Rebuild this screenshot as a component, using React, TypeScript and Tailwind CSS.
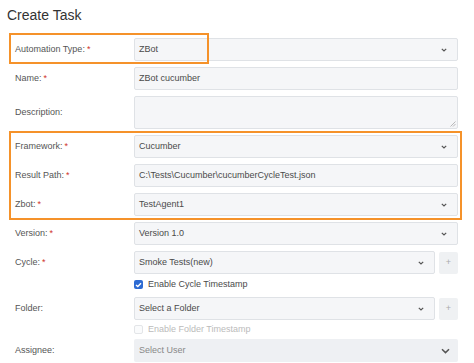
import React from "react";

const font = { fontFamily: '"Liberation Sans", Arial, sans-serif' };

function Chevron({ big = false }: { big?: boolean }) {
  return big ? (
    <svg width="9" height="6" viewBox="0 0 9 6" className="shrink-0">
      <path d="M1 1.2 L4.5 4.6 L8 1.2" fill="none" stroke="#555" strokeWidth="1.5" />
    </svg>
  ) : (
    <svg width="6" height="4" viewBox="0 0 6 4" className="shrink-0">
      <path d="M0.8 0.8 L3 3 L5.2 0.8" fill="none" stroke="#555" strokeWidth="1.2" />
    </svg>
  );
}

function Label({ text, required = false }: { text: string; required?: boolean }) {
  return (
    <div className="w-[119px] shrink-0 text-[9px] text-[#555]">
      {text}
      {required && <span className="ml-[2px] text-[#d0342c]">*</span>}
    </div>
  );
}

function Field({ value, select = false }: { value: string; select?: boolean }) {
  return (
    <div className="flex h-[23px] flex-1 items-center justify-between rounded-[2px] border border-[#dfe2e6] bg-[#f5f6f8] pl-[4px] pr-[10px] text-[9px] text-[#4a4a4a]">
      <span>{value}</span>
      {select && <Chevron />}
    </div>
  );
}

function Row({
  label,
  required,
  value,
  select,
  plus,
}: {
  label: string;
  required?: boolean;
  value: string;
  select?: boolean;
  plus?: boolean;
}) {
  return (
    <div className="flex items-center">
      <Label text={label} required={required} />
      <Field value={value} select={select} />
      {plus && (
        <div className="ml-[4px] flex h-[22px] w-[19px] items-center justify-center rounded-[2px] bg-[#eff1f3] text-[9px] text-[#aaa]">
          +
        </div>
      )}
    </div>
  );
}

function Check({ label, checked }: { label: string; checked: boolean }) {
  return (
    <div className="flex h-[11px] items-center pl-[119px]">
      {checked ? (
        <div className="flex h-[9px] w-[9px] items-center justify-center rounded-[2px] bg-[#2d6bd3]">
          <svg width="7" height="6" viewBox="0 0 7 6">
            <path d="M1 3 L2.8 4.6 L6 1.2" fill="none" stroke="#fff" strokeWidth="1.4" />
          </svg>
        </div>
      ) : (
        <div className="h-[9px] w-[9px] rounded-[2px] border border-[#e3e5e8] bg-[#fafbfc]" />
      )}
      <span className={`ml-[5px] text-[9px] ${checked ? "text-[#4a4a4a]" : "text-[#bbb]"}`}>{label}</span>
    </div>
  );
}

export default function App() {
  return (
    <div className="relative h-[363px] w-[474px] overflow-hidden bg-white" style={font}>
      <h1 className="pl-[7px] pt-[7px] text-[14px] leading-[17px] text-[#333]">Create Task</h1>

      <div className="mt-[14px] flex flex-col pl-[15px] pr-[16px]">
        <Row label="Automation Type:" required value="ZBot" select />
        <div className="mt-[6px]">
          <Row label="Name:" required value="ZBot cucumber" />
        </div>
        <div className="mt-[6px] flex items-center">
          <Label text="Description:" />
          <div className="relative h-[33px] flex-1 rounded-[2px] border border-[#dfe2e6] bg-[#f5f6f8]">
            <svg width="6" height="6" viewBox="0 0 6 6" className="absolute bottom-[1px] right-[1px]">
              <path d="M0.5 5.5 L5.5 0.5 M3 5.5 L5.5 3" stroke="#aaa" strokeWidth="0.8" />
            </svg>
          </div>
        </div>
        <div className="mt-[6px]">
          <Row label="Framework:" required value="Cucumber" select />
        </div>
        <div className="mt-[6px]">
          <Row label="Result Path:" required value="C:\Tests\Cucumber\cucumberCycleTest.json" />
        </div>
        <div className="mt-[6px]">
          <Row label="Zbot:" required value="TestAgent1" select />
        </div>
        <div className="mt-[6px]">
          <Row label="Version:" required value="Version 1.0" select />
        </div>
        <div className="mt-[6px]">
          <Row label="Cycle:" required value="Smoke Tests(new)" select plus />
        </div>
        <div className="mt-[5px]">
          <Check label="Enable Cycle Timestamp" checked />
        </div>
        <div className="mt-[7px]">
          <Row label="Folder:" value="Select a Folder" select plus />
        </div>
        <div className="mt-[4px]">
          <Check label="Enable Folder Timestamp" checked={false} />
        </div>
        <div className="mt-[4px] flex items-center">
          <Label text="Assignee:" />
          <div className="flex h-[23px] flex-1 items-center justify-between rounded-[2px] bg-[#eef0f3] pl-[5px] pr-[8px] text-[9px] text-[#888]">
            <span>Select User</span>
            <Chevron big />
          </div>
        </div>
      </div>

      {/* highlight annotations */}
      <div className="pointer-events-none absolute left-[9px] top-[33px] h-[31px] w-[200px] border-2 border-[#f5922a]" />
      <div className="pointer-events-none absolute left-[9px] top-[131px] h-[89px] w-[453px] border-2 border-[#f5922a]" />
    </div>
  );
}
